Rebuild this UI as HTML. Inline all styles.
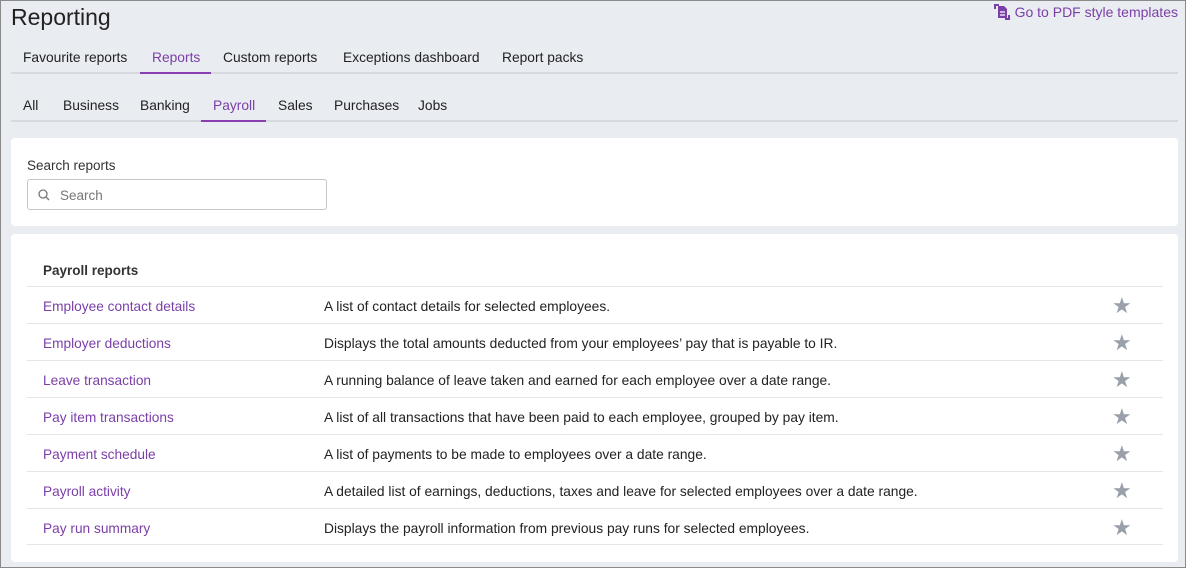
<!DOCTYPE html>
<html><head><style>
*{margin:0;padding:0;box-sizing:border-box}
body{width:1186px;height:568px;background:#e9ecf0;font-family:"Liberation Sans",sans-serif;color:#1c1c1c;position:relative;overflow:hidden;font-size:13.5px}
.frame{position:absolute;left:0;top:0;width:1186px;height:568px;border:1px solid #8a8a8a;pointer-events:none;z-index:5}
.a{position:absolute}
h1{position:absolute;left:11px;top:4px;font-weight:400;font-size:23px;color:#222}
.pdf{right:8px;top:3px;color:#7b3fa8;font-size:14px;display:flex;align-items:center;gap:4px}
.tabs{left:11px;right:8px;height:2px;background:#d6d9de}
.t{top:0;font-size:13.8px;color:#222}
.sel{color:#7b3fa8}
.ul{height:2px;background:#8a3fb0}
.panel{background:#fff;border-radius:4px;left:11px;right:8px}
.inp{left:27px;top:179px;width:300px;height:31px;border:1px solid #c3c6cb;border-radius:3px}
.row{left:27px;width:1136px;height:37px;border-top:1px solid #e4e6e9}
.row span{position:absolute;top:12px}
.n{left:16px;color:#7b3fa8;font-size:13.7px}
.d{left:297px;color:#222;font-size:13.8px}
.s{left:1085px;top:6px!important;color:#99a0aa;font-size:22px}
</style></head><body>
<div class="frame"></div>
<h1>Reporting</h1>
<div class="a pdf"><svg width="18" height="18" viewBox="0 0 18 18"><path d="M2 6V2h4M16 12v4h-4" stroke="#7b3fa8" stroke-width="2" fill="none"/><path d="M5 3h6l3 3v9H5z" fill="#7b3fa8"/><path d="M7 9h5M7 12h5" stroke="#fff" stroke-width="1.3"/></svg>Go to PDF style templates</div>
<div class="a t" style="left:23px;top:50px">Favourite reports</div>
<div class="a t sel" style="left:152px;top:50px">Reports</div>
<div class="a t" style="left:223px;top:50px">Custom reports</div>
<div class="a t" style="left:343px;top:50px">Exceptions dashboard</div>
<div class="a t" style="left:502px;top:50px">Report packs</div>
<div class="a tabs" style="top:72px"></div>
<div class="a ul" style="left:140px;top:72px;width:71px"></div>
<div class="a t" style="left:23px;top:98px">All</div>
<div class="a t" style="left:63px;top:98px">Business</div>
<div class="a t" style="left:140px;top:98px">Banking</div>
<div class="a t sel" style="left:213px;top:98px">Payroll</div>
<div class="a t" style="left:278px;top:98px">Sales</div>
<div class="a t" style="left:334px;top:98px">Purchases</div>
<div class="a t" style="left:418px;top:98px">Jobs</div>
<div class="a tabs" style="top:120px"></div>
<div class="a ul" style="left:201px;top:120px;width:65px"></div>
<div class="a panel" style="top:138px;height:88px"></div>
<div class="a" style="left:27px;top:158px;color:#333">Search reports</div>
<div class="a inp"><svg class="a" style="left:10px;top:9px" width="12" height="12" viewBox="0 0 12 12"><circle cx="5" cy="5" r="4" stroke="#777" stroke-width="1.3" fill="none"/><path d="M8 8l3 3" stroke="#777" stroke-width="1.3"/></svg><span class="a" style="left:32px;top:8px;color:#777">Search</span></div>
<div class="a panel" style="top:234px;height:328px"></div>
<div class="a" style="left:43px;top:263px;font-weight:700;color:#333">Payroll reports</div>
<div class="a row" style="top:286px"><span class="n">Employee contact details</span><span class="d">A list of contact details for selected employees.</span><span class="s">★</span></div>
<div class="a row" style="top:323px"><span class="n">Employer deductions</span><span class="d">Displays the total amounts deducted from your employees’ pay that is payable to IR.</span><span class="s">★</span></div>
<div class="a row" style="top:360px"><span class="n">Leave transaction</span><span class="d">A running balance of leave taken and earned for each employee over a date range.</span><span class="s">★</span></div>
<div class="a row" style="top:397px"><span class="n">Pay item transactions</span><span class="d">A list of all transactions that have been paid to each employee, grouped by pay item.</span><span class="s">★</span></div>
<div class="a row" style="top:434px"><span class="n">Payment schedule</span><span class="d">A list of payments to be made to employees over a date range.</span><span class="s">★</span></div>
<div class="a row" style="top:471px"><span class="n">Payroll activity</span><span class="d">A detailed list of earnings, deductions, taxes and leave for selected employees over a date range.</span><span class="s">★</span></div>
<div class="a row" style="top:508px;border-bottom:1px solid #e4e6e9"><span class="n">Pay run summary</span><span class="d">Displays the payroll information from previous pay runs for selected employees.</span><span class="s">★</span></div>
</body></html>
